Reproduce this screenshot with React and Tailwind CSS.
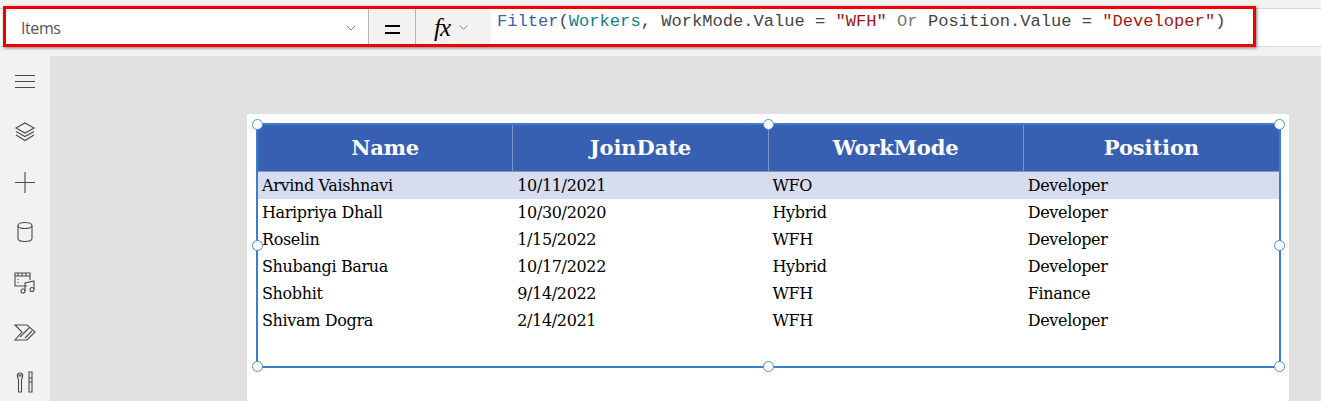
import React from "react";
import { ChevronDown } from "lucide-react";

const rows = [
  ["Arvind Vaishnavi", "10/11/2021", "WFO", "Developer"],
  ["Haripriya Dhall", "10/30/2020", "Hybrid", "Developer"],
  ["Roselin", "1/15/2022", "WFH", "Developer"],
  ["Shubangi Barua", "10/17/2022", "Hybrid", "Developer"],
  ["Shobhit", "9/14/2022", "WFH", "Finance"],
  ["Shivam Dogra", "2/14/2021", "WFH", "Developer"],
];

const headers = ["Name", "JoinDate", "WorkMode", "Position"];

const Handle = ({ className }) => (
  <span className={`absolute w-[11px] h-[11px] rounded-full bg-white border-[1.5px] border-[#4a90d9] ${className}`} />
);

const SideIcon = ({ children }) => (
  <div className="h-[50px] flex items-center justify-center">
    <svg width="24" height="24" viewBox="0 0 24 24" fill="none" stroke="#4a4a4a" strokeWidth="1.1">
      {children}
    </svg>
  </div>
);

const App = () => {
  return (
    <div className="w-[1321px] h-[401px] overflow-hidden bg-[#e1e1e1] flex flex-col relative">
      {/* formula bar */}
      <div className="h-[56px] bg-[#f3f2f1] pt-[8px] shrink-0">
        <div className="h-[39px] bg-white flex border-y border-[#d8d8d8]">
          <div className="w-[369px] pl-[21px] pr-[9px] flex items-center justify-between border-r border-[#b5b5b5] text-[16px] text-[#555] font-['Open_Sans',sans-serif]">
            <span className="tracking-[-0.4px]">Items</span>
            <ChevronDown size={16} strokeWidth={1} color="#444" />
          </div>
          <div className="w-[47px] bg-[#f3f2f1] flex items-center justify-center border-r border-[#b5b5b5]">
            <div className="w-[15px] h-[9px] border-y-2 border-black mt-[4px]" />
          </div>
          <div className="w-[75px] bg-[#f3f2f1] flex items-center pl-[18px] gap-[6px] font-['Liberation_Serif',serif] italic text-[25px] text-black">
            <span className="tracking-[-1px] leading-none">fx</span>
            <ChevronDown size={15} strokeWidth={1} color="#444" />
          </div>
          <div className="flex-1 pl-[6px] pt-[1px] font-['Liberation_Mono',monospace] text-[17.1px] leading-[24px] text-[#444] whitespace-pre">
            <span className="text-[#3a5fa8]">Filter</span>(<span className="text-[#11808a]">Workers</span>, WorkMode.Value = <span className="text-[#a31515]">"WFH"</span> <span className="text-[#777]">Or</span> Position.Value = <span className="text-[#a31515]">"Developer"</span>)
          </div>
        </div>
      </div>

      <div className="flex flex-1 min-h-0">
        {/* left rail */}
        <div className="w-[50px] bg-[#f3f2f1] shrink-0 pt-[1px]">
          <SideIcon>
            <path d="M2 5.5h20M2 11.5h20M2 17.5h20" />
          </SideIcon>
          <SideIcon>
            <path d="M12 3l9 5-9 5-9-5zM3 11.5l9 5 9-5M3 15l9 5.5 9-5.5" />
          </SideIcon>
          <SideIcon>
            <path d="M12 2v21M2 12.5h20" />
          </SideIcon>
          <SideIcon>
            <ellipse cx="12" cy="5.5" rx="7" ry="3" />
            <path d="M5 5.5v13c0 1.8 3 3 7 3s7-1.2 7-3v-13" />
          </SideIcon>
          <SideIcon>
            <path d="M14 16H2V3h15v7M2 6h15M5 3v3M9 3v3M13 3v3M5 9v1M5 12v1" />
            <path d="M12 21V13l9-2v8" />
            <circle cx="10" cy="21" r="2" />
            <circle cx="19" cy="19.5" r="2" />
          </SideIcon>
          <SideIcon>
            <path d="M2 5h12l8 7-8 8H2l7-8zM7 17l9-9M12 18l7-7" />
          </SideIcon>
          <SideIcon>
            <path d="M6 3a2.5 2.5 0 0 0-1.500 3.500L5.500 10v12h3V10l1-3.500A2.500 2.500 0 0 0 8 3v3H6z" />
            <path d="M16 2h3v6h-3zM16 8h3v4h-3zM16 12h3v10h-3z" />
          </SideIcon>
        </div>

        {/* canvas */}
        <div className="flex-1 pl-[197px] pr-[32px] pt-[58px]">
          <div className="bg-white h-[400px] pl-[9px] pr-[8px] pt-[9px]">
            <div className="relative h-[245px] border-2 border-[#3a80c8] font-['DejaVu_Serif',serif] text-black">
              <div className="grid grid-cols-4 h-[46px] bg-[#3860b2]">
                {headers.map((h, i) => (
                  <div
                    key={h}
                    className={`flex items-center justify-center text-white font-bold text-[21px] tracking-[-0.1px] ${i < 3 ? "border-r border-[#7d97cb]" : ""}`}
                  >
                    {h}
                  </div>
                ))}
              </div>
              {rows.map((row, i) => (
                <div
                  key={row[0]}
                  className={`grid grid-cols-4 text-[16px] tracking-[-0.35px] ${i === 0 ? "h-[28px] bg-[#d7dcef] border-t border-[#7d97cb]" : "h-[27px]"}`}
                >
                  {row.map((cell) => (
                    <div key={cell} className="pl-[4px] flex items-center">
                      {cell}
                    </div>
                  ))}
                </div>
              ))}
              <Handle className="-left-[6px] -top-[6px]" />
              <Handle className="left-1/2 -ml-[6px] -top-[6px]" />
              <Handle className="-right-[6px] -top-[6px]" />
              <Handle className="-left-[6px] top-1/2 -mt-[6px]" />
              <Handle className="-right-[6px] top-1/2 -mt-[6px]" />
              <Handle className="-left-[6px] -bottom-[6px]" />
              <Handle className="left-1/2 -ml-[6px] -bottom-[6px]" />
              <Handle className="-right-[6px] -bottom-[6px]" />
            </div>
          </div>
        </div>
      </div>

      {/* red annotation box */}
      <div className="absolute left-[3px] top-[6px] w-[1253px] h-[41px] border-[3px] border-[#f00000] shadow-[1px_1px_3px_rgba(0,0,0,0.5)]" />
    </div>
  );
};

export default App;
